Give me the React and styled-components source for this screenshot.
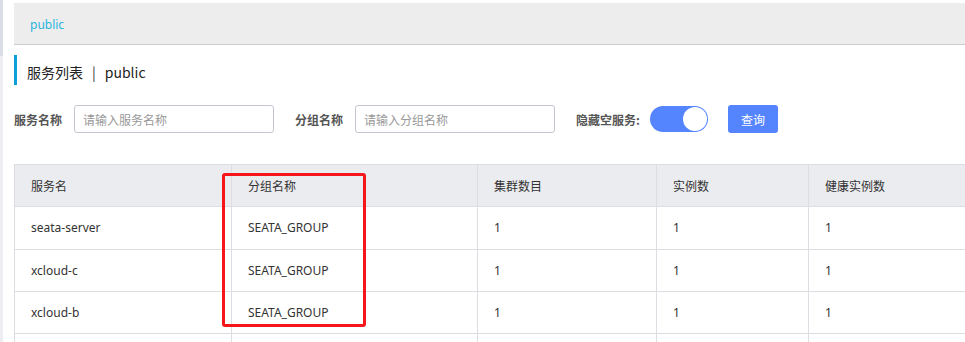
import React from "react";
import styled, { createGlobalStyle } from "styled-components";

const Global = createGlobalStyle`
  html, body { margin: 0; padding: 0; background: #fff; }
  body {
    font-family: "Noto Sans", "Noto Sans CJK SC", sans-serif;
    font-size: 12px;
    color: #333;
    overflow: hidden;
  }
  * { box-sizing: border-box; }
`;

const Page = styled.div`
  display: flex;
  width: 965px;
  height: 342px;
  overflow: hidden;
`;

const SideEdge = styled.div`
  flex: 0 0 3px;
  background: linear-gradient(to bottom, #d9dde4 0, #d9dde4 56px, #eceef2 56px, #eceef2 100%);
`;

const Main = styled.div`
  flex: 1;
  min-width: 0;
  padding: 3px 0 0 11px;
  overflow: hidden;
`;

const Breadcrumb = styled.div`
  height: 42px;
  display: flex;
  align-items: center;
  padding-left: 16px;
  padding-top: 2px;
  background: #ededed;
  border-bottom: 1px solid #cccccc;
  color: #2ab4de;
  font-size: 12px;
`;

const Title = styled.div`
  margin-top: 10px;
  height: 30px;
  border-left: 3px solid #0c9fd8;
  padding: 5px 0 0 10px;
  font-size: 14px;
  line-height: 24px;
  color: #222;
  font-family: "Noto Sans CJK SC", "Noto Sans", sans-serif;
`;

const Sep = styled.span`
  margin: 0 9px;
  color: #333;
`;

const Form = styled.div`
  margin-top: 20px;
  display: flex;
  align-items: center;
  height: 28px;
`;

const Label = styled.span`
  font-family: "Noto Sans CJK SC", sans-serif;
  font-weight: 700;
  font-size: 12px;
  color: #555;
  margin-right: ${(p) => p.$gap}px;
  white-space: nowrap;
`;

const Input = styled.input`
  width: 200px;
  height: 28px;
  border: 1px solid #c4c6cf;
  border-radius: 3px;
  padding: 0 8px;
  font-family: "Noto Sans CJK SC", sans-serif;
  font-size: 12px;
  color: #333;
  margin-right: 21px;
  outline: none;
  &::placeholder { color: #999; }
`;

const Toggle = styled.div`
  position: relative;
  width: 58px;
  height: 26px;
  border-radius: 13px;
  background: #5584ff;
  margin-right: 20px;
  flex: 0 0 auto;
`;

const Knob = styled.span`
  position: absolute;
  right: 1px;
  top: 1px;
  width: 24px;
  height: 24px;
  border-radius: 50%;
  background: #fff;
`;

const Button = styled.button`
  width: 50px;
  height: 28px;
  border: none;
  border-radius: 3px;
  background: #5584ff;
  color: #fff;
  font-family: "Noto Sans CJK SC", sans-serif;
  font-size: 12px;
  padding: 0;
`;

const TableWrap = styled.div`
  position: relative;
  margin-top: 31px;
  width: 1120px;
`;

const Table = styled.div`
  display: grid;
  grid-template-columns: 217px 246px 179px 152px 326px;
  border-top: 1px solid #dcdee3;
  border-left: 1px solid #dcdee3;
`;

const Cell = styled.div`
  height: 42.3px;
  display: flex;
  align-items: center;
  padding-left: 16px;
  border-right: 1px solid #dcdee3;
  border-bottom: 1px solid #dcdee3;
  background: ${(p) => (p.$head ? "#ebecf0" : "#fff")};
  color: #333;
  font-size: 12px;
  white-space: nowrap;
`;

const Highlight = styled.div`
  position: absolute;
  left: 208px;
  top: 9px;
  width: 144px;
  height: 154px;
  border: 3px solid #f5161b;
  border-radius: 3px;
  pointer-events: none;
`;

const headers = ["服务名", "分组名称", "集群数目", "实例数", "健康实例数"];
const rows = [
  ["seata-server", "SEATA_GROUP", "1", "1", "1"],
  ["xcloud-c", "SEATA_GROUP", "1", "1", "1"],
  ["xcloud-b", "SEATA_GROUP", "1", "1", "1"],
  ["", "", "", "", ""],
];

export default function App() {
  return (
    <>
      <Global />
      <Page>
        <SideEdge />
        <Main>
          <Breadcrumb>public</Breadcrumb>
          <Title>
            服务列表<Sep>|</Sep>public
          </Title>
          <Form>
            <Label $gap={12}>服务名称</Label>
            <Input placeholder="请输入服务名称" />
            <Label $gap={12}>分组名称</Label>
            <Input placeholder="请输入分组名称" />
            <Label $gap={10}>隐藏空服务:</Label>
            <Toggle>
              <Knob />
            </Toggle>
            <Button>查询</Button>
          </Form>
          <TableWrap>
            <Table>
              {headers.map((h) => (
                <Cell $head key={h}>{h}</Cell>
              ))}
              {rows.map((r, i) =>
                r.map((c, j) => <Cell key={`${i}-${j}`}>{c}</Cell>)
              )}
            </Table>
            <Highlight />
          </TableWrap>
        </Main>
      </Page>
    </>
  );
}
